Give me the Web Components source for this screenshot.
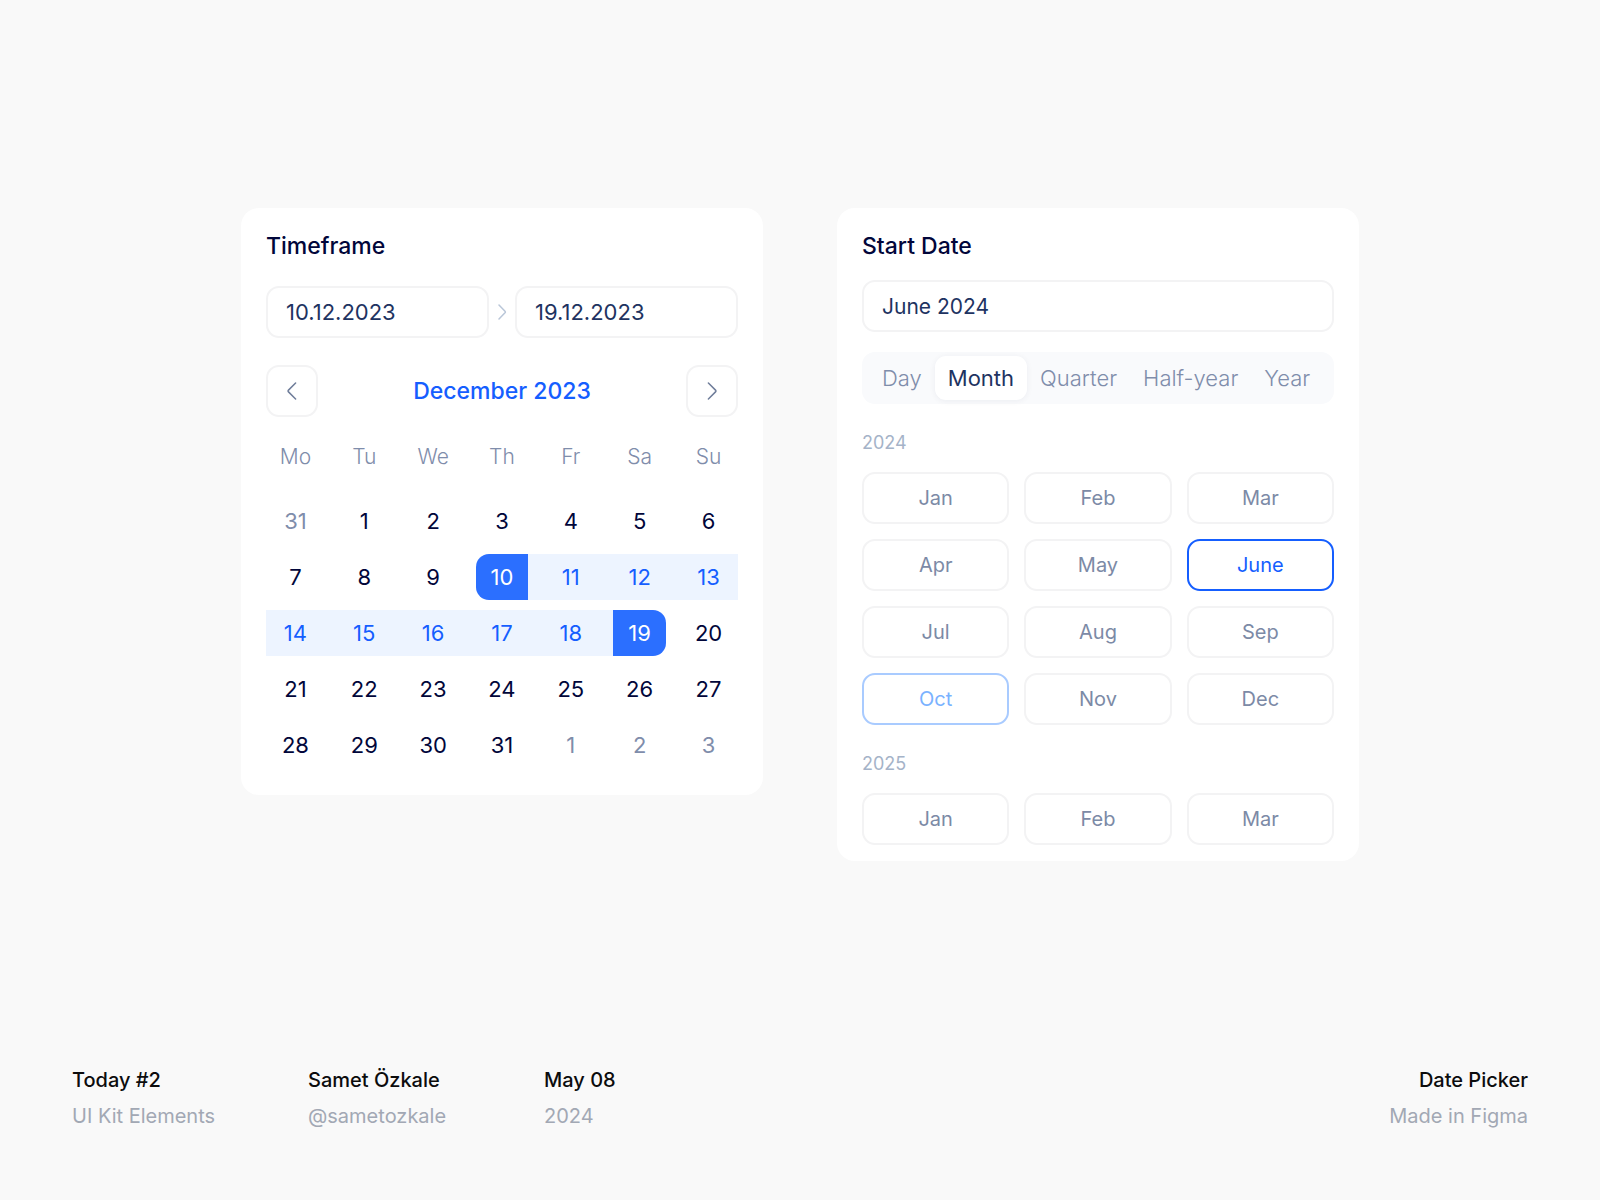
<!DOCTYPE html>
<html lang="en">
<head>
<meta charset="utf-8">
<meta name="viewport" content="width=device-width, initial-scale=1">
<title>Date Picker</title>
<style>
    body {
        margin: 0;
        min-height: 100vh;
        display: flex;
        flex-direction: column;
        background: #f9f9f9;
        font-family: Inter, "Liberation Sans", sans-serif;
        --ink: #01063a;
        --navy: #1e3361;
        --muted: #7f8dab;
        --line: #f3f3f4;
        --blue: #155eff;
        --radius: 13px;
    }

    main {
        flex: 1;
        display: grid;
        grid-template-columns: repeat(2, minmax(0, 522px));
        justify-content: center;
        align-items: start;
        gap: 74px;
        padding: 208px 24px 40px;
    }

    footer {
        display: flex;
        flex-wrap: wrap;
        padding: 0 72px 66px;
    }

    footer credit-item:last-child {
        margin-left: auto;
        text-align: right;
    }

    @media (max-width: 1000px) {
        main {
            grid-template-columns: minmax(0, 522px);
            padding-top: 40px;
        }
    }
</style>
</head>
<body>
<main>
    <picker-card heading="Timeframe">
        <range-calendar></range-calendar>
    </picker-card>
    <picker-card heading="Start Date">
        <month-picker></month-picker>
    </picker-card>
</main>
<footer>
    <credit-item>Today #2<span slot="note">UI Kit Elements</span></credit-item>
    <credit-item>Samet Özkale<span slot="note">@sametozkale</span></credit-item>
    <credit-item>May 08<span slot="note">2024</span></credit-item>
    <credit-item>Date Picker<span slot="note">Made in Figma</span></credit-item>
</footer>

<script>
class PickerCard extends HTMLElement {
    constructor() {
        super();
        this.attachShadow({ mode: 'open' });
    }

    connectedCallback() {
        this.shadowRoot.innerHTML = `
        <style>
        :host {
            display: block;
            box-sizing: border-box;
            padding: 20px 25px 16px;
            background: #fff;
            border-radius: 18px;
        }

        h2 {
            margin: 0;
            font-size: 23px;
            line-height: 36px;
            font-weight: 500;
            color: var(--ink);
        }
        </style>
        <h2>${this.getAttribute('heading')}</h2>
        <slot></slot>
        `;
    }
}

class DateField extends HTMLElement {
    constructor() {
        super();
        this.attachShadow({ mode: 'open' });
    }

    connectedCallback() {
        this.shadowRoot.innerHTML = `
        <style>
        :host {
            display: block;
            min-width: 0;
        }

        input {
            display: block;
            box-sizing: border-box;
            width: 100%;
            height: 52px;
            padding: 0 18px;
            border: 2px solid var(--line);
            border-radius: var(--radius);
            background: #fff;
            color: var(--navy);
            font: 400 var(--field-size, 22px)/28px Inter, sans-serif;
        }

        input:focus {
            border-color: var(--blue);
            outline: none;
        }
        </style>
        <input type="text" aria-label="${this.getAttribute('label')}" value="${this.getAttribute('value')}">
        `;
    }
}

class RangeCalendar extends HTMLElement {
    constructor() {
        super();
        this.attachShadow({ mode: 'open' });
        this.start = 10;
        this.end = 19;
    }

    connectedCallback() {
        this.render();
    }

    // one cell; index 0 is the trailing day of the previous month
    cell(index) {
        const outside = index < 1 || index > 31;
        const day = index < 1 ? 31 : index > 31 ? index - 31 : index;
        let type = 'day';
        if (outside) type = 'outside';
        else if (index === this.start) type = 'start';
        else if (index === this.end) type = 'end';
        else if (index > this.start && index < this.end) type = 'between';
        return `<td class="${type}"><button type="button">${day}</button></td>`;
    }

    render() {
        const names = ['Mo', 'Tu', 'We', 'Th', 'Fr', 'Sa', 'Su'];
        const rows = [0, 1, 2, 3, 4].map(week =>
            `<tr>${names.map((name, i) => this.cell(week * 7 + i)).join('')}</tr>`
        ).join('');

        this.shadowRoot.innerHTML = `
        <style>
        :host {
            display: block;
            padding: 22px 0 6px;
        }

        .range {
            display: grid;
            grid-template-columns: 1fr 26px 1fr;
            align-items: center;
            justify-items: stretch;
        }

        .range svg {
            justify-self: center;
            color: #b9c6d8;
        }

        svg {
            display: block;
            fill: none;
            stroke: currentColor;
            stroke-width: 1.5;
            stroke-linecap: round;
            stroke-linejoin: round;
        }

        nav {
            display: flex;
            align-items: center;
            justify-content: space-between;
            margin: 27px 0 12px;
        }

        nav button {
            display: grid;
            place-items: center;
            width: 52px;
            height: 52px;
            padding: 0;
            border: 2px solid var(--line);
            border-radius: var(--radius);
            background: #fff;
            color: #6f7d9a;
            cursor: pointer;
        }

        h3 {
            margin: 0;
            font-size: 23px;
            line-height: 28px;
            font-weight: 500;
            color: var(--blue);
        }

        /* the table is one column gap wider than the card, the ends are clipped */
        .days {
            overflow: hidden;
        }

        table {
            width: calc(100% + 10px);
            margin: 0 -5px;
            table-layout: fixed;
            border-spacing: 0;
        }

        th {
            height: 56px;
            padding: 0 0 8px;
            font-size: 21px;
            line-height: 28px;
            font-weight: 300;
            color: var(--muted);
        }

        td {
            padding: 5px 0;
            background-clip: content-box;
        }

        td button {
            display: block;
            width: 100%;
            height: 46px;
            padding: 0;
            border: 0;
            background: none;
            color: var(--ink);
            font: 400 22px/28px Inter, sans-serif;
            cursor: pointer;
        }

        .outside button {
            color: var(--muted);
        }

        .between {
            background-color: #edf4ff;
        }

        .between button {
            color: var(--blue);
        }

        .start {
            background-image: linear-gradient(to right, transparent 50%, #edf4ff 50%);
        }

        .end {
            background-image: linear-gradient(to left, transparent 50%, #edf4ff 50%);
        }

        .start button,
        .end button {
            width: calc(100% - 16px);
            margin: 0 8px;
            background: #2b6fff;
            color: #fff;
        }

        .start button {
            border-radius: var(--radius) 0 0 var(--radius);
        }

        .end button {
            border-radius: 0 var(--radius) var(--radius) 0;
        }
        </style>
        <div class="range">
            <date-field label="From" value="10.12.2023"></date-field>
            <svg width="10" height="16" viewBox="0 0 10 16"><path d="M2 1 L8 7.2 Q8.7 8 8 8.8 L2 15"/></svg>
            <date-field label="To" value="19.12.2023"></date-field>
        </div>
        <nav>
            <button type="button" aria-label="Previous month">
                <svg width="10" height="18" viewBox="0 0 10 18"><path d="M8.6 1 L1.5 8.1 Q0.7 9 1.5 9.9 L8.6 17"/></svg>
            </button>
            <h3>December 2023</h3>
            <button type="button" aria-label="Next month">
                <svg width="10" height="18" viewBox="0 0 10 18"><path d="M1.4 1 L8.5 8.1 Q9.3 9 8.5 9.9 L1.4 17"/></svg>
            </button>
        </nav>
        <div class="days">
            <table>
                <thead><tr>${names.map(name => `<th scope="col">${name}</th>`).join('')}</tr></thead>
                <tbody>${rows}</tbody>
            </table>
        </div>
        `;
    }
}

class SegmentBar extends HTMLElement {
    constructor() {
        super();
        this.attachShadow({ mode: 'open' });
    }

    connectedCallback() {
        const options = this.getAttribute('options').split(',');
        const active = this.getAttribute('active');
        this.shadowRoot.innerHTML = `
        <style>
        :host {
            display: flex;
            box-sizing: border-box;
            height: 52px;
            padding: 4px 7px;
            border-radius: var(--radius);
            background: #f9fafc;
        }

        button {
            padding: 0 13px;
            border: 0;
            border-radius: 11px;
            background: none;
            color: var(--muted);
            font: 300 22px/28px Inter, sans-serif;
            white-space: nowrap;
            cursor: pointer;
        }

        button[aria-pressed="true"] {
            background: #fff;
            color: var(--navy);
            font-weight: 400;
            box-shadow: 0 1px 6px rgba(20, 30, 60, 0.06);
        }
        </style>
        ${options.map(name => `<button type="button" aria-pressed="${name === active}">${name}</button>`).join('')}
        `;
        this.shadowRoot.addEventListener('click', (event) => {
            const button = event.target.closest('button');
            if (!button) return;
            this.shadowRoot.querySelectorAll('button').forEach(b => b.setAttribute('aria-pressed', b === button));
        });
    }
}

class YearMonths extends HTMLElement {
    constructor() {
        super();
        this.attachShadow({ mode: 'open' });
    }

    connectedCallback() {
        const months = this.getAttribute('months').split(',');
        const selected = this.getAttribute('selected');
        const hint = this.getAttribute('hint');
        const state = name => name === selected ? 'selected' : name === hint ? 'hint' : '';
        this.shadowRoot.innerHTML = `
        <style>
        :host {
            display: block;
        }

        h3 {
            margin: 0 0 17px;
            font-size: 18px;
            line-height: 24px;
            font-weight: 400;
            color: #a5b3c8;
        }

        .months {
            display: grid;
            grid-template-columns: repeat(3, 1fr);
            gap: 15px;
        }

        button {
            height: 52px;
            padding: 0;
            border: 2px solid var(--line);
            border-radius: var(--radius);
            background: #fff;
            color: #7c8aa6;
            font: 400 20px/28px Inter, sans-serif;
            cursor: pointer;
        }

        .selected {
            border-color: var(--blue);
            color: var(--blue);
        }

        .hint {
            border-color: #a9cbff;
            color: #7ab2ff;
        }
        </style>
        <h3>${this.getAttribute('year')}</h3>
        <div class="months">
            ${months.map(name => `<button type="button" class="${state(name)}">${name}</button>`).join('')}
        </div>
        `;
    }
}

class MonthPicker extends HTMLElement {
    constructor() {
        super();
        this.attachShadow({ mode: 'open' });
    }

    connectedCallback() {
        this.shadowRoot.innerHTML = `
        <style>
        :host {
            display: block;
            padding-top: 16px;
            --field-size: 21px;
        }

        segment-bar {
            margin-top: 20px;
        }

        year-months {
            margin-top: 27px;
        }
        </style>
        <date-field label="Start Date" value="June 2024"></date-field>
        <segment-bar options="Day,Month,Quarter,Half-year,Year" active="Month"></segment-bar>
        <year-months year="2024" months="Jan,Feb,Mar,Apr,May,June,Jul,Aug,Sep,Oct,Nov,Dec" selected="June" hint="Oct"></year-months>
        <year-months year="2025" months="Jan,Feb,Mar"></year-months>
        `;
    }
}

class CreditItem extends HTMLElement {
    constructor() {
        super();
        this.attachShadow({ mode: 'open' });
    }

    connectedCallback() {
        this.shadowRoot.innerHTML = `
        <style>
        :host {
            display: block;
            min-width: 236px;
            font-size: 20px;
            line-height: 36px;
        }

        .name {
            font-weight: 500;
            color: #0c0c0d;
        }

        .note {
            font-weight: 400;
            color: #a2a8b4;
        }
        </style>
        <div class="name"><slot></slot></div>
        <div class="note"><slot name="note"></slot></div>
        `;
    }
}

customElements.define('picker-card', PickerCard);
customElements.define('date-field', DateField);
customElements.define('range-calendar', RangeCalendar);
customElements.define('segment-bar', SegmentBar);
customElements.define('year-months', YearMonths);
customElements.define('month-picker', MonthPicker);
customElements.define('credit-item', CreditItem);
</script>
</body>
</html>
